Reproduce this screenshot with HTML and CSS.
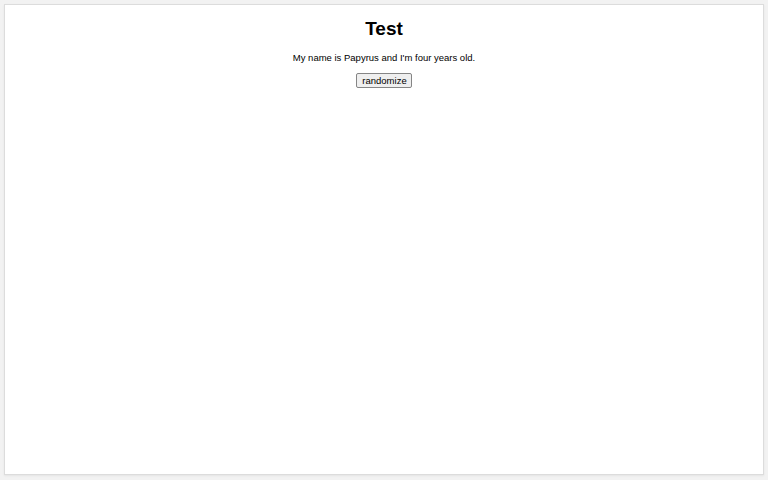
FILE: index.html
```html
<!DOCTYPE html>
<html>
<head>
<meta charset="utf-8">
<link rel="stylesheet" href="styles.css">
</head>
<body>
<div class="panel">
  <h1 class="title">Test</h1>
  <p class="text">My name is Papyrus and I'm four years old.</p>
  <button class="btn">randomize</button>
</div>
</body>
</html>
```
FILE: styles.css
```css
html, body { margin: 0; padding: 0; }
body {
  background: #f2f2f2;
  padding: 4px 4px 5px 4px;
  height: 480px;
  box-sizing: border-box;
  font-family: "Liberation Sans", Arial, sans-serif;
}
.panel {
  background: #fff;
  border: 1px solid #dcdcdc;
  box-shadow: 0 1px 2px rgba(0, 0, 0, 0.06);
  height: 100%;
  box-sizing: border-box;
  display: flex;
  flex-direction: column;
  align-items: center;
  padding-top: 13px;
}
.title {
  margin: 0;
  font-size: 19px;
  font-weight: bold;
  line-height: 22px;
}
.text {
  margin: 11px 0 0;
  font-size: 9.5px;
  line-height: 13px;
}
.btn {
  margin-top: 9px;
  font-family: "Liberation Sans", Arial, sans-serif;
  font-size: 9.5px;
  line-height: 11px;
  padding: 1px 4px 1px 5px;
  background: #efefef;
  border: 1px solid #858585;
  border-radius: 2px;
  color: #000;
}
```
